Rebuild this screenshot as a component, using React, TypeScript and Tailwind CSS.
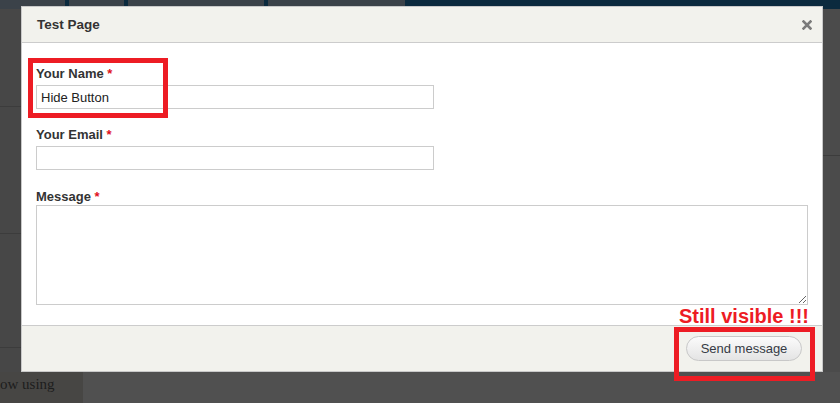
import React from "react";

const sans = { fontFamily: '"Liberation Sans", Arial, sans-serif' };

function Label({ text, className = "" }: { text: string; className?: string }) {
  return (
    <div className={`h-[18px] leading-[18px] text-[13px] font-bold text-[#333333] ${className}`}>
      {text} <span className="text-[#e0101a]">*</span>
    </div>
  );
}

export default function App() {
  return (
    <div
      className="relative w-[840px] h-[403px] overflow-hidden bg-[#4d4d4d] flex flex-col"
      style={sans}
    >
      {/* dimmed page: top bar */}
      <div className="h-[9px] flex shrink-0 bg-[#0b2a3e]">
        <div className="w-[65px] bg-[#3b4249]" />
        <div className="w-[4px]" />
        <div className="w-[55px] bg-[#3b4249]" />
        <div className="w-[4px]" />
        <div className="w-[136px] bg-[#3b4249]" />
        <div className="w-[4px]" />
        <div className="w-[137px] bg-[#3b4249]" />
      </div>

      {/* dimmed page: body */}
      <div className="flex-1 flex">
        <div className="w-[83px] flex flex-col bg-[#474747]">
          <div className="h-[98px] border-b border-[#3c3c3c]" />
          <div className="h-[127px] border-b border-[#3c3c3c]" />
          <div className="h-[114px] border-b border-[#3c3c3c]" />
          <div className="h-[24px]" />
          <div
            className="flex-1 bg-[#474644] text-[15px] leading-[22px] text-[#1d1d1d] pt-[1px]"
            style={{ fontFamily: '"Liberation Serif", "Times New Roman", serif' }}
          >
            ow using
          </div>
        </div>
        <div className="flex-1 flex flex-col">
          <div className="h-[147px] border-b border-[#3c3c3c] bg-[#4b4b4b]" />
          <div className="flex-1 bg-[#4b4b4b]" />
          <div className="h-[31px] bg-[#505050]" />
        </div>
      </div>

      {/* modal dialog */}
      <div className="absolute left-[21px] top-[6px] w-[802px] h-[366px] border border-[#c9c9c9] bg-white flex flex-col">
        <div className="h-[36px] shrink-0 bg-[#f2f2ed] border-b border-[#cccccc] flex items-center justify-between pl-[15px] pr-[10px]">
          <span className="text-[13.5px] font-bold text-[#333333] mt-[1px]">Test Page</span>
          <svg width="10" height="10" viewBox="0 0 10 10" className="mt-[1px]">
            <path d="M1.5 1.5 L8.5 8.5 M8.5 1.5 L1.5 8.5" stroke="#7b7b7b" strokeWidth="2.6" strokeLinecap="square" />
          </svg>
        </div>

        <div className="flex-1 pl-[14px] pt-[22px] flex flex-col">
          <Label text="Your Name" />
          <input
            defaultValue="Hide Button"
            className="mt-[2px] w-[398px] h-[24px] border border-[#cccccc] px-[4px] text-[13px] text-[#222] outline-none"
            style={sans}
          />
          <Label text="Your Email" className="mt-[17px]" />
          <input
            className="mt-[2px] w-[398px] h-[24px] border border-[#cccccc] px-[4px] text-[13px] outline-none"
            style={sans}
          />
          <Label text="Message" className="mt-[18px]" />
          <textarea
            className="mt-[-1px] w-[772px] h-[100px] border border-[#cccccc] outline-none"
            style={sans}
          />
        </div>

        <div className="h-[46px] shrink-0 bg-[#f2f2ed] border-t border-[#cccccc] flex justify-end items-start pt-[10px] pr-[20px]">
          <button
            className="w-[116px] h-[25px] rounded-full border border-[#c8c8c8] bg-gradient-to-b from-[#fbfbfb] to-[#e4e4e4] text-[13px] text-[#363b45] leading-[23px]"
            style={sans}
          >
            Send message
          </button>
        </div>
      </div>

      {/* annotations */}
      <div className="absolute left-[28px] top-[58px] w-[140px] h-[60px] border-[5px] border-[#ed1c24]" />
      <div className="absolute left-[674px] top-[327px] w-[141px] h-[54px] border-[5px] border-[#ed1c24]" />
      <div className="absolute left-[679px] top-[306px] text-[20px] leading-[20px] font-bold text-[#ed1c24] whitespace-nowrap">
        Still visible !!!
      </div>
    </div>
  );
}
